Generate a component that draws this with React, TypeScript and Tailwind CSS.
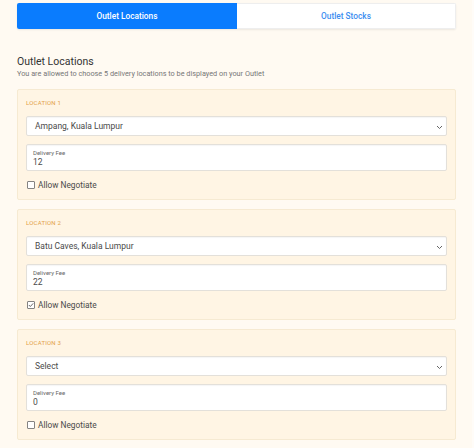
import React from "react";

type Loc = { label: string; place: string; fee: string; negotiate: boolean };

const locations: Loc[] = [
  { label: "LOCATION 1", place: "Ampang, Kuala Lumpur", fee: "12", negotiate: false },
  { label: "LOCATION 2", place: "Batu Caves, Kuala Lumpur", fee: "22", negotiate: true },
  { label: "LOCATION 3", place: "Select", fee: "0", negotiate: false },
];

function Chevron() {
  return (
    <svg width="7" height="5" viewBox="0 0 7 5" className="absolute right-[3px] top-[8px]">
      <path d="M1 1 L3.5 3.5 L6 1" fill="none" stroke="#666" strokeWidth="1" />
    </svg>
  );
}

function CheckBox({ checked }: { checked: boolean }) {
  return (
    <svg width="8" height="8" viewBox="0 0 8 8">
      <rect x="0.5" y="0.5" width="7" height="7" rx="0.5" fill="#fff" stroke="#666" strokeWidth="0.8" />
      {checked && <path d="M1.8 4 L3.3 5.5 L6.2 2.4" fill="none" stroke="#555" strokeWidth="0.9" />}
    </svg>
  );
}

function Card({ loc }: { loc: Loc }) {
  return (
    <div className="h-[111px] rounded-[2px] border border-[#f6ead2] bg-[#fff5e4] px-[8px] pt-[9px]">
      <div className="h-[8px] text-[6px] leading-[8px] tracking-[0.2px] text-[#e3a24a]">{loc.label}</div>
      <div className="relative mt-[9px] flex h-[20px] items-center rounded-[2px] border border-[#e3e0da] bg-white pl-[8px] text-[8.5px] text-[#4a4a4a] shadow-[inset_0_1px_1px_rgba(0,0,0,0.04)]">
        {loc.place}
        <Chevron />
      </div>
      <div className="mt-[8px] flex h-[27px] flex-col rounded-[2px] border border-[#e3e0da] bg-white pl-[6px] pt-[4px] shadow-[inset_0_1px_1px_rgba(0,0,0,0.04)]">
        <div className="text-[6px] leading-[7px] text-[#666]">Delivery Fee</div>
        <div className="mt-[1px] text-[8.5px] leading-[11px] text-[#4a4a4a]">{loc.fee}</div>
      </div>
      <div className="mt-[9px] flex h-[10px] items-center gap-[3px] pl-[1px] text-[8.3px] text-[#4a4a4a]">
        <CheckBox checked={loc.negotiate} />
        <span>Allow Negotiate</span>
      </div>
    </div>
  );
}

export default function App() {
  return (
    <div className="flex h-[448px] w-[474px] bg-[#fffcf8]" style={{ fontFamily: "Roboto, 'Liberation Sans', sans-serif" }}>
      <div className="h-full w-[472px] bg-[#fffaf2] pl-[17px] pr-[16px] pt-[3px]">
        <div className="flex h-[26px] overflow-hidden rounded-[2px] shadow-[0_1px_2px_rgba(0,0,0,0.08)]">
          <div className="flex w-[220px] items-center justify-center bg-[#0a7cfe] text-[8.3px] font-medium text-white">
            Outlet Locations
          </div>
          <div className="flex flex-1 items-center justify-center border border-l-0 border-[#eee] bg-white text-[8.3px] font-medium text-[#3d8ef0]">
            Outlet Stocks
          </div>
        </div>
        <div className="mt-[26px] text-[10.5px] leading-[13px] text-[#333]">Outlet Locations</div>
        <div className="mt-[1px] text-[7.3px] leading-[9px] text-[#777]">
          You are allowed to choose 5 delivery locations to be displayed on your Outlet
        </div>
        <div className="mt-[11px] flex flex-col gap-[9px]">
          {locations.map((l) => (
            <Card key={l.label} loc={l} />
          ))}
        </div>
      </div>
    </div>
  );
}
